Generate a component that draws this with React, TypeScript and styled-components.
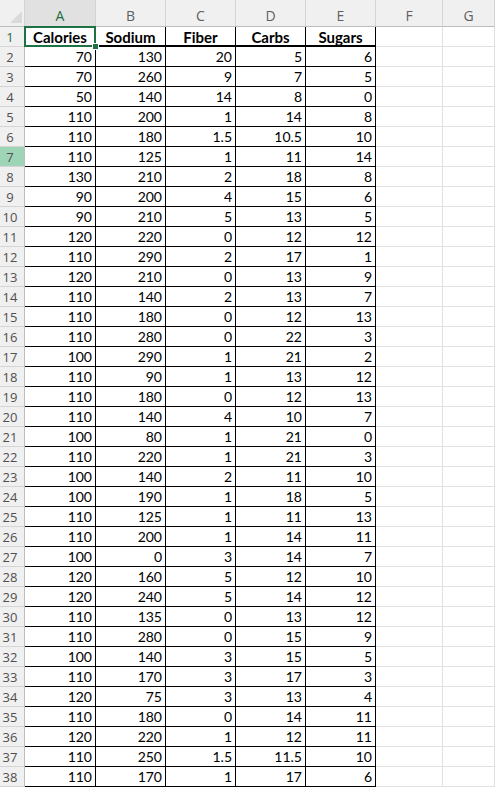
import React from "react";
import styled, { createGlobalStyle, css } from "styled-components";

const Global = createGlobalStyle`
  html, body { margin: 0; padding: 0; background: #ffffff; overflow: hidden; }
  #root { width: 495px; height: 788px; overflow: hidden; }
`;

const headers = ["Calories", "Sodium", "Fiber", "Carbs", "Sugars"];
const rows: (number | string)[][] = [
  [70, 130, 20, 5, 6],
  [70, 260, 9, 7, 5],
  [50, 140, 14, 8, 0],
  [110, 200, 1, 14, 8],
  [110, 180, 1.5, 10.5, 10],
  [110, 125, 1, 11, 14],
  [130, 210, 2, 18, 8],
  [90, 200, 4, 15, 6],
  [90, 210, 5, 13, 5],
  [120, 220, 0, 12, 12],
  [110, 290, 2, 17, 1],
  [120, 210, 0, 13, 9],
  [110, 140, 2, 13, 7],
  [110, 180, 0, 12, 13],
  [110, 280, 0, 22, 3],
  [100, 290, 1, 21, 2],
  [110, 90, 1, 13, 12],
  [110, 180, 0, 12, 13],
  [110, 140, 4, 10, 7],
  [100, 80, 1, 21, 0],
  [110, 220, 1, 21, 3],
  [100, 140, 2, 11, 10],
  [100, 190, 1, 18, 5],
  [110, 125, 1, 11, 13],
  [110, 200, 1, 14, 11],
  [100, 0, 3, 14, 7],
  [120, 160, 5, 12, 10],
  [120, 240, 5, 14, 12],
  [110, 135, 0, 13, 12],
  [110, 280, 0, 15, 9],
  [100, 140, 3, 15, 5],
  [110, 170, 3, 17, 3],
  [120, 75, 3, 13, 4],
  [110, 180, 0, 14, 11],
  [120, 220, 1, 12, 11],
  [110, 250, 1.5, 11.5, 10],
  [110, 170, 1, 17, 6],
];

const colLetters = ["A", "B", "C", "D", "E", "F", "G"];

const Sheet = styled.div`
  display: grid;
  grid-template-columns: 25px 71px 70px 70px 70px 70px 67px 1fr;
  grid-template-rows: 27px;
  grid-auto-rows: 20px;
  width: 495px;
`;

const Corner = styled.div`
  background: #f0f0f0;
  border-right: 1px solid #d4d4d4;
  border-bottom: 1px solid #bdbdbd;
  box-sizing: border-box;
  display: flex;
  align-items: flex-end;
  justify-content: flex-end;
  padding: 0 2px 3px 0;
`;

const ColHead = styled.div<{ $active?: boolean }>`
  box-sizing: border-box;
  background: ${(p) => (p.$active ? "#e1e1e1" : "#f0f0f0")};
  border-right: 1px solid #d4d4d4;
  border-bottom: 1px solid #bdbdbd;
  color: ${(p) => (p.$active ? "#1e6e42" : "#5f5f5f")};
  font-family: "Open Sans", "Noto Sans", sans-serif;
  font-size: 14px;
  display: flex;
  justify-content: center;
  align-items: flex-end;
  padding-bottom: 1px;
  line-height: 18px;
`;

const RowHead = styled.div<{ $active?: boolean; $hover?: boolean }>`
  box-sizing: border-box;
  background: ${(p) => (p.$hover ? "#9fd5b7" : "#f0f0f0")};
  border-right: 1px solid #bdbdbd;
  border-bottom: 1px solid #d4d4d4;
  color: ${(p) => (p.$active ? "#1e6e42" : "#4f4f4f")};
  font-family: "Open Sans", "Noto Sans", sans-serif;
  font-size: 13px;
  display: flex;
  justify-content: center;
  align-items: center;
  padding-right: 4px;
  line-height: 16px;
`;

const cellBase = css`
  box-sizing: border-box;
  font-family: Lato, "Liberation Sans", sans-serif;
  font-size: 14px;
  color: #000;
  display: flex;
  align-items: center;
  line-height: 18px;
  white-space: nowrap;
  overflow: visible;
  position: relative;
`;

const HeadCell = styled.div<{ $selected?: boolean }>`
  ${cellBase};
  font-size: 15px;
  font-weight: 700;
  justify-content: center;
  border-right: 1px solid #000;
  border-bottom: 2px solid #000;
  padding-top: 1px;
  ${(p) =>
    p.$selected &&
    css`
      &::after {
        content: "";
        position: absolute;
        left: -1px;
        top: -1px;
        right: -1px;
        bottom: -2px;
        border: 2px solid #1e7145;
        pointer-events: none;
        z-index: 2;
      }
    `}
`;

const Handle = styled.span`
  position: absolute;
  right: -4px;
  bottom: -5px;
  width: 5px;
  height: 5px;
  background: #1e7145;
  border: 1px solid #fff;
  z-index: 3;
`;

const DataCell = styled.div`
  ${cellBase};
  justify-content: flex-end;
  padding-right: 3px;
  border-right: 1px solid #000;
  border-bottom: 1px solid #000;
`;

const EmptyCell = styled.div`
  box-sizing: border-box;
  border-right: 1px solid #e1e1e1;
  border-bottom: 1px solid #e1e1e1;
`;

const CornerMark = () => (
  <svg width="12" height="12" viewBox="0 0 12 12">
    <polygon points="12,0 12,12 0,12" fill="#dadada" />
  </svg>
);

export default function App() {
  return (
    <>
      <Global />
      <Sheet>
        <Corner>
          <CornerMark />
        </Corner>
        {colLetters.map((c, i) => (
          <ColHead key={c} $active={i === 0}>
            {c}
          </ColHead>
        ))}

        <RowHead $active>1</RowHead>
        {headers.map((h, i) => (
          <HeadCell key={h} $selected={i === 0}>
            {h}
            {i === 0 && <Handle />}
          </HeadCell>
        ))}
        <EmptyCell />
        <EmptyCell />

        {rows.map((r, ri) => (
          <React.Fragment key={ri}>
            <RowHead $hover={ri + 2 === 7}>{ri + 2}</RowHead>
            {r.map((v, ci) => (
              <DataCell key={ci}>{v}</DataCell>
            ))}
            <EmptyCell />
            <EmptyCell />
          </React.Fragment>
        ))}
      </Sheet>
    </>
  );
}
